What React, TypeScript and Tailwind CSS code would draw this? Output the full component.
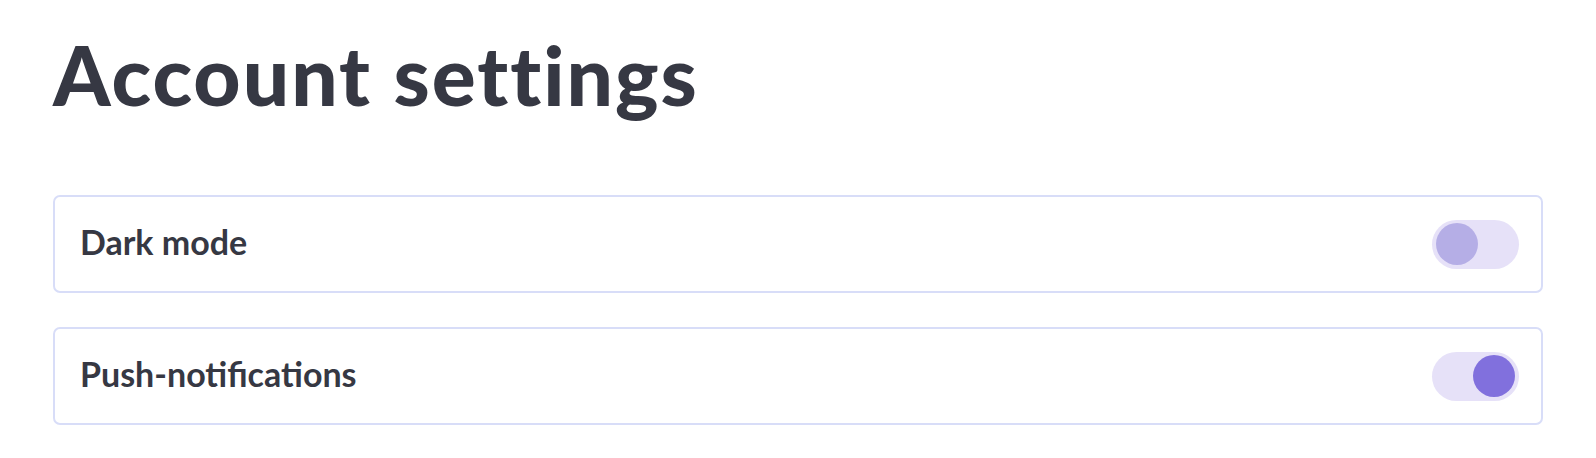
import { useState } from 'react';

interface ToggleRowProps {
  label: string;
  checked: boolean;
  onChange: (v: boolean) => void;
}

const ToggleRow = ({ label, checked, onChange }: ToggleRowProps) => (
  <div className="flex h-[98px] items-center justify-between rounded-[7px] border-2 border-[#d8ddf8] bg-white pl-[25px] pr-[22px]">
    <span className="pb-[5px] text-[34px] font-bold text-[#363843]">{label}</span>
    <button
      type="button"
      role="switch"
      aria-checked={checked}
      onClick={() => onChange(!checked)}
      className={`flex h-[49px] w-[87px] items-center rounded-full bg-[#e6e1f8] px-[4px] ${
        checked ? 'justify-end' : 'justify-start'
      }`}
    >
      <span
        className={`h-[42px] w-[42px] rounded-full ${checked ? 'bg-[#8170dd]' : 'bg-[#b5aee6]'}`}
      />
    </button>
  </div>
);

export default function App() {
  const [darkMode, setDarkMode] = useState(false);
  const [push, setPush] = useState(true);

  return (
    <div
      className="h-[458px] overflow-hidden bg-white px-[53px] pt-[26px]"
      style={{ fontFamily: 'Lato, "Noto Sans", sans-serif' }}
    >
      <h1 className="text-[82px] font-black leading-[96px] tracking-[2px] text-[#363843]">
        Account settings
      </h1>
      <div className="mt-[73px] flex flex-col gap-[34px]">
        <ToggleRow label="Dark mode" checked={darkMode} onChange={setDarkMode} />
        <ToggleRow label="Push-notifications" checked={push} onChange={setPush} />
      </div>
    </div>
  );
}
